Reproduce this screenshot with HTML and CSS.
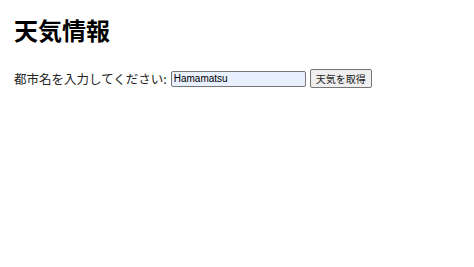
FILE: index.html
```html
<!DOCTYPE html>
<html lang="ja">
<head>
    <meta charset="utf-8">
    <title>天気情報</title>
    <link rel="stylesheet" href="styles.css">
</head>
<body>
    <h1 class="title">天気情報</h1>
    <div class="search">
        <label for="city" class="search-label">都市名を入力してください:</label>
        <input type="text" id="city" class="city-input" value="Hamamatsu">
        <button id="getWeather" class="get-btn">天気を取得</button>
    </div>
    <div id="result"></div>
</body>
</html>
```

FILE: styles.css
```css
body {
    margin: 0;
    padding: 14px;
    font-family: "Liberation Sans", "Noto Sans CJK JP", sans-serif;
    color: #000;
    background: #fff;
}
.title {
    font-family: "Noto Sans CJK JP", sans-serif;
    font-size: 24px;
    line-height: 28px;
    margin: 2px 0 25px;
}
.search {
    display: flex;
    align-items: center;
    gap: 4px;
    font-size: 12.5px;
    line-height: 16px;
}
.search-label {
    font-family: "Noto Sans CJK JP", sans-serif;
    color: #222;
}
.city-input {
    box-sizing: border-box;
    width: 135px;
    height: 16px;
    font-family: "Liberation Sans", sans-serif;
    font-size: 10px;
    padding: 0 2px;
    border: 1px solid #767676;
    border-radius: 2px;
    background: #e8f0fe;
}
.get-btn {
    box-sizing: border-box;
    height: 19px;
    font-family: "Noto Sans CJK JP", sans-serif;
    font-size: 10px;
    line-height: 14px;
    padding: 0 5px;
    border: 1px solid #767676;
    border-radius: 2px;
    background: #efefef;
    color: #222;
}
```
